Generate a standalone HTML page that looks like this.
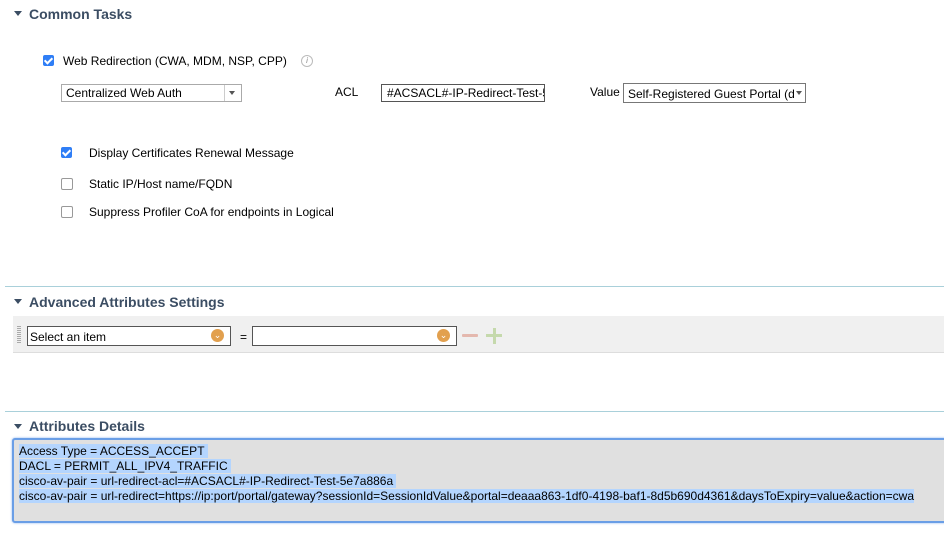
<!DOCTYPE html>
<html><head><style>
body{margin:0;width:944px;height:535px;background:#fff;font-family:"Liberation Sans",sans-serif;font-size:12px;color:#000;position:relative;overflow:hidden}
.a{position:absolute}
.h{font-weight:bold;font-size:14px;color:#3b4d63}
.tri{width:0;height:0;border-left:4px solid transparent;border-right:4px solid transparent;border-top:5px solid #3b4d63}
.cb{width:11px;height:11px;border-radius:2px;background:#2f7ef6}
.cb::after{content:"";position:absolute;left:3px;top:1px;width:3px;height:6px;border:solid #fff;border-width:0 2px 2px 0;transform:rotate(45deg)}
.ce{width:10px;height:10px;border:1px solid #999;border-radius:2px;background:#fff}
.sel{background:#b4d5fe}
</style></head><body>
<div class="a tri" style="left:14px;top:11px"></div>
<div class="a h" style="left:29px;top:6px">Common Tasks</div>

<div class="a cb" style="left:43px;top:55px"></div>
<div class="a" style="left:63px;top:54px">Web Redirection (CWA, MDM, NSP, CPP)</div>
<div class="a" style="left:301px;top:55px;width:10px;height:10px;border:1px solid #bbb;border-radius:50%;font-size:8px;color:#888;text-align:center;line-height:10px;font-style:italic">i</div>

<div class="a" style="left:61px;top:84px;width:179px;height:16px;border:1px solid #aaa;background:#fff"><span style="position:absolute;left:4px;top:1px">Centralized Web Auth</span><div style="position:absolute;right:0;top:0;width:16px;height:16px;border-left:1px solid #ccc"><div class="tri" style="position:absolute;left:4px;top:6px;border-top-color:#555;border-left-width:3.5px;border-right-width:3.5px;border-top-width:4px"></div></div></div>

<div class="a" style="left:335px;top:85px">ACL</div>
<div class="a" style="left:381px;top:84px;width:162px;height:16px;border:1px solid #555;background:#fff;overflow:hidden;white-space:nowrap"><span style="position:absolute;left:5px;top:1px">#ACSACL#-IP-Redirect-Test-5</span></div>
<div class="a" style="left:590px;top:85px">Value</div>
<div class="a" style="left:623px;top:83px;width:181px;height:18px;border:1px solid #777;background:#fff;overflow:hidden;white-space:nowrap"><span style="position:absolute;left:4px;top:3px">Self-Registered Guest Portal (d</span><div class="tri" style="position:absolute;right:3px;top:7px;border-top-color:#555;border-left-width:3.5px;border-right-width:3.5px;border-top-width:4px;background:#fff"></div></div>

<div class="a cb" style="left:61px;top:147px"></div>
<div class="a" style="left:89px;top:146px">Display Certificates Renewal Message</div>
<div class="a ce" style="left:61px;top:178px"></div>
<div class="a" style="left:89px;top:177px">Static IP/Host name/FQDN</div>
<div class="a ce" style="left:61px;top:206px"></div>
<div class="a" style="left:89px;top:205px">Suppress Profiler CoA for endpoints in Logical</div>

<div class="a" style="left:5px;top:286px;width:939px;height:1px;background:#a9d0da"></div>
<div class="a tri" style="left:14px;top:299px"></div>
<div class="a h" style="left:29px;top:294px">Advanced Attributes Settings</div>
<div class="a" style="left:13px;top:316px;width:931px;height:36px;background:#f0f0f0;border-bottom:1px solid #ddd"></div>
<div class="a" style="left:17px;top:326px;width:4px;height:18px;background:repeating-linear-gradient(#aaa 0 1px,transparent 1px 2px)"></div>
<div class="a" style="left:27px;top:326px;width:202px;height:18px;border:1px solid #555;background:#fff"><span style="position:absolute;left:2px;top:3px">Select an item</span><div style="position:absolute;right:6px;top:2px;width:13px;height:13px;border-radius:50%;background:#e2a04e;color:#fff;font-size:9px;text-align:center;line-height:12px">⌄</div></div>
<div class="a" style="left:240px;top:330px">=</div>
<div class="a" style="left:252px;top:326px;width:203px;height:18px;border:1px solid #555;background:#fff"><div style="position:absolute;right:6px;top:2px;width:13px;height:13px;border-radius:50%;background:#e2a04e;color:#fff;font-size:9px;text-align:center;line-height:12px">⌄</div></div>
<div class="a" style="left:462px;top:334px;width:16px;height:3px;background:#e4b8ae;border-radius:1px"></div>
<div class="a" style="left:486px;top:334px;width:16px;height:3px;background:#c5d9ac"></div>
<div class="a" style="left:492.5px;top:328px;width:3px;height:16px;background:#c5d9ac"></div>

<div class="a" style="left:5px;top:411px;width:939px;height:1px;background:#a9d0da"></div>
<div class="a tri" style="left:14px;top:424px"></div>
<div class="a h" style="left:29px;top:418px">Attributes Details</div>
<div class="a" style="left:12px;top:438px;width:936px;height:81px;border:2px solid #6a9ee6;border-radius:3px;background:#e0e0e0;box-shadow:0 0 2px #8ab4f0"></div>
<div class="a" style="left:19px;top:444px;line-height:15px;white-space:nowrap">
<span class="sel">Access Type = ACCESS_ACCEPT&nbsp;</span><br>
<span class="sel">DACL = PERMIT_ALL_IPV4_TRAFFIC&nbsp;</span><br>
<span class="sel">cisco-av-pair = url-redirect-acl=#ACSACL#-IP-Redirect-Test-5e7a886a&nbsp;</span><br>
<span class="sel">cisco-av-pair = url-redirect=https://ip:port/portal/gateway?sessionId=SessionIdValue&amp;portal=deaaa863-1df0-4198-baf1-8d5b690d4361&amp;daysToExpiry=value&amp;action=cwa</span></div>
</body></html>
